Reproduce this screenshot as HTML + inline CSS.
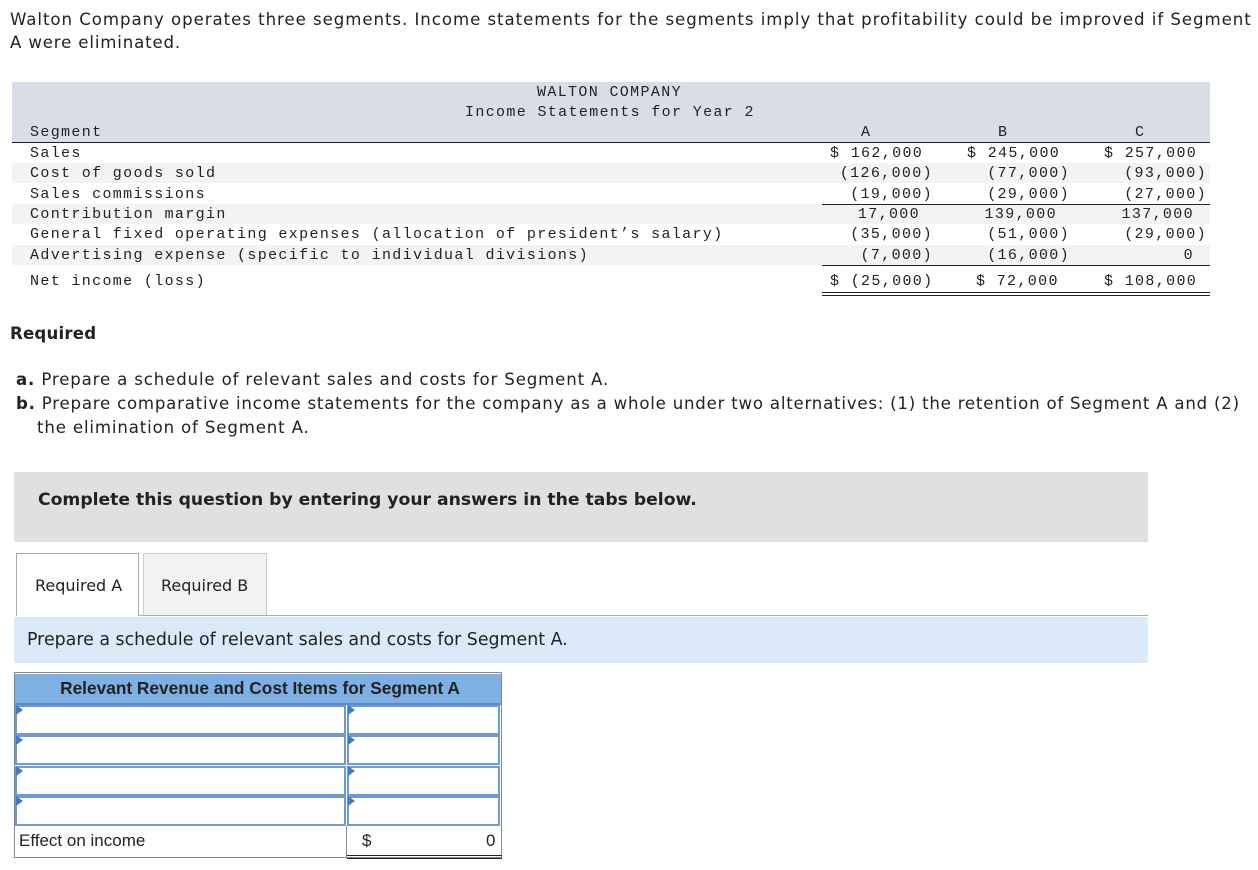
<!DOCTYPE html>
<html><head><style>
body{margin:0;width:1258px;height:870px;background:#fff;position:relative;font-family:"Liberation Sans",Arial,sans-serif;color:#222;overflow:hidden}
.a{position:absolute;white-space:nowrap}
.t{font-family:"DejaVu Sans",sans-serif;font-size:16.6px;letter-spacing:0.85px}
.m{font-family:"Liberation Mono",monospace;font-size:15px;letter-spacing:1.35px;color:#222}
.r{text-align:right}
.ln{position:absolute;height:1px;background:#222}
.cell{position:absolute;border:2px solid #6d9bd0;box-sizing:border-box;background:#fff}
.tri{position:absolute;width:0;height:0;border-top:5px solid transparent;border-bottom:5px solid transparent;border-left:7px solid #3d7cc9}
</style></head><body>
<div class="a t" style="left:10px;top:10px;letter-spacing:0.95px">Walton Company operates three segments. Income statements for the segments imply that profitability could be improved if Segment</div>
<div class="a t" style="left:10px;top:33px">A were eliminated.</div>

<div class="a" style="left:12px;top:82px;width:1198px;height:60px;background:#d9dde8"></div>
<div class="a" style="left:12px;top:163px;width:1198px;height:20px;background:#f3f3f3"></div>
<div class="a" style="left:12px;top:204px;width:1198px;height:20px;background:#f3f3f3"></div>
<div class="a" style="left:12px;top:245px;width:1198px;height:20px;background:#f3f3f3"></div>
<div class="ln" style="left:12px;top:142px;width:1198px"></div>
<div class="a m" style="left:537px;top:84px">WALTON COMPANY</div>
<div class="a m" style="left:465px;top:104px">Income Statements for Year 2</div>
<div class="a m" style="left:30px;top:124px">Segment</div>
<div class="a m" style="left:30px;top:145px">Sales</div>
<div class="a m" style="left:30px;top:165px">Cost of goods sold</div>
<div class="a m" style="left:30px;top:186px">Sales commissions</div>
<div class="a m" style="left:30px;top:206px">Contribution margin</div>
<div class="a m" style="left:30px;top:226px">General fixed operating expenses (allocation of president’s salary)</div>
<div class="a m" style="left:30px;top:247px">Advertising expense (specific to individual divisions)</div>
<div class="a m" style="left:30px;top:273px">Net income (loss)</div>

<div class="a m" style="left:861px;top:124px">A</div>
<div class="a m" style="left:998px;top:124px">B</div>
<div class="a m" style="left:1135px;top:124px">C</div>

<div class="a m" style="left:830px;top:145px">$ 162,000</div>
<div class="a m" style="left:967px;top:145px">$ 245,000</div>
<div class="a m" style="left:1104px;top:145px">$ 257,000</div>
<div class="a m r" style="left:800px;width:133px;top:165px">(126,000)</div>
<div class="a m r" style="left:937px;width:133px;top:165px">(77,000)</div>
<div class="a m r" style="left:1074px;width:133px;top:165px">(93,000)</div>
<div class="a m r" style="left:800px;width:133px;top:186px">(19,000)</div>
<div class="a m r" style="left:937px;width:133px;top:186px">(29,000)</div>
<div class="a m r" style="left:1074px;width:133px;top:186px">(27,000)</div>
<div class="a m r" style="left:800px;width:120px;top:206px">17,000</div>
<div class="a m r" style="left:937px;width:120px;top:206px">139,000</div>
<div class="a m r" style="left:1074px;width:120px;top:206px">137,000</div>
<div class="a m r" style="left:800px;width:133px;top:226px">(35,000)</div>
<div class="a m r" style="left:937px;width:133px;top:226px">(51,000)</div>
<div class="a m r" style="left:1074px;width:133px;top:226px">(29,000)</div>
<div class="a m r" style="left:800px;width:133px;top:247px">(7,000)</div>
<div class="a m r" style="left:937px;width:133px;top:247px">(16,000)</div>
<div class="a m r" style="left:1074px;width:120px;top:247px">0</div>
<div class="a m" style="left:830px;top:273px">$ (25,000)</div>
<div class="a m" style="left:976px;top:273px">$ 72,000</div>
<div class="a m" style="left:1104px;top:273px">$ 108,000</div>

<div class="ln" style="left:822px;top:204px;width:388px"></div>
<div class="ln" style="left:822px;top:265px;width:388px"></div>
<div class="ln" style="left:822px;top:292px;width:388px"></div>
<div class="ln" style="left:822px;top:295px;width:388px"></div>

<div class="a t" style="left:10px;top:324px;font-weight:bold;letter-spacing:0.2px">Required</div>
<div class="a t" style="left:16px;top:370px"><b>a.</b> Prepare a schedule of relevant sales and costs for Segment A.</div>
<div class="a t" style="left:16px;top:394px;letter-spacing:0.78px"><b>b.</b> Prepare comparative income statements for the company as a whole under two alternatives: (1) the retention of Segment A and (2)</div>
<div class="a t" style="left:37px;top:418px">the elimination of Segment A.</div>

<div class="a" style="left:14px;top:472px;width:1134px;height:70px;background:#e0e0e0"></div>
<div class="a" style="left:38px;top:490px;font-weight:bold;font-family:'DejaVu Sans',sans-serif;font-size:17.2px">Complete this question by entering your answers in the tabs below.</div>

<div class="a" style="left:16px;top:553px;width:123px;height:63px;border:1px solid #aaa;border-bottom:none;background:#fff;box-sizing:border-box"></div>
<div class="a" style="left:143px;top:553px;width:124px;height:62px;border:1px solid #ccc;border-bottom:none;background:#f2f2f2;box-sizing:border-box"></div>
<div class="a" style="left:35px;top:576px;font-family:'DejaVu Sans',sans-serif;font-size:16px">Required A</div>
<div class="a" style="left:161px;top:576px;font-family:'DejaVu Sans',sans-serif;font-size:16px">Required B</div>
<div class="a" style="left:139px;top:615px;width:1009px;height:1px;background:#aaa"></div>

<div class="a" style="left:14px;top:617px;width:1134px;height:46px;background:#dbeaf8"></div>
<div class="a" style="left:27px;top:630px;font-family:'DejaVu Sans',sans-serif;font-size:17.4px">Prepare a schedule of relevant sales and costs for Segment A.</div>

<div class="a" style="left:14px;top:672px;width:488px;height:186px;border:1px solid #888;box-sizing:border-box;background:#fff"></div>
<div class="a" style="left:15px;top:674px;width:486px;height:31px;background:#7eb0e4;border-bottom:2px solid #5a8cc8;box-sizing:border-box"></div>
<div class="a" style="left:17px;top:678px;width:486px;text-align:center;font-weight:bold;font-size:17.3px;color:#222">Relevant Revenue and Cost Items for Segment A</div>

<div class="cell" style="left:15px;top:705px;width:331px;height:30px"></div>
<div class="cell" style="left:347px;top:705px;width:153px;height:30px"></div>
<div class="cell" style="left:15px;top:735px;width:331px;height:30px"></div>
<div class="cell" style="left:347px;top:735px;width:153px;height:30px"></div>
<div class="cell" style="left:15px;top:766px;width:331px;height:30px"></div>
<div class="cell" style="left:347px;top:766px;width:153px;height:30px"></div>
<div class="cell" style="left:15px;top:796px;width:331px;height:30px"></div>
<div class="cell" style="left:347px;top:796px;width:153px;height:30px"></div>
<div class="tri" style="left:16px;top:705px"></div><div class="tri" style="left:348px;top:705px"></div>
<div class="tri" style="left:16px;top:735px"></div><div class="tri" style="left:348px;top:735px"></div>
<div class="tri" style="left:16px;top:766px"></div><div class="tri" style="left:348px;top:766px"></div>
<div class="tri" style="left:16px;top:796px"></div><div class="tri" style="left:348px;top:796px"></div>

<div class="a" style="left:346px;top:826px;width:1px;height:31px;background:#888"></div>
<div class="a" style="left:19px;top:831px;font-size:17px">Effect on income</div>
<div class="a" style="left:362px;top:831px;font-size:17px">$</div>
<div class="a" style="left:486px;top:831px;font-size:17px">0</div>
<div class="ln" style="left:347px;top:855px;width:155px"></div>
<div class="ln" style="left:347px;top:858px;width:155px"></div>
</body></html>
